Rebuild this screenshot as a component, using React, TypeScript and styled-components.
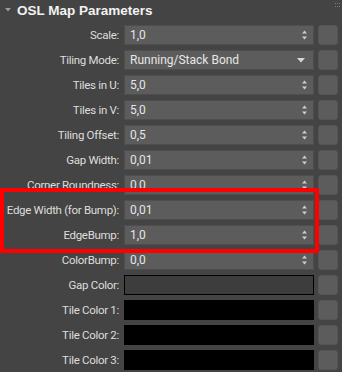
import styled, { createGlobalStyle } from 'styled-components'

const GlobalStyle = createGlobalStyle`
  html, body {
    margin: 0;
    padding: 0;
    background: #444444;
  }
  body {
    font-family: Roboto, 'Liberation Sans', Arial, sans-serif;
  }
`

const Panel = styled.div`
  position: relative;
  width: 342px;
  height: 372px;
  background: #444444;
  overflow: hidden;
`

const Header = styled.div`
  display: flex;
  align-items: center;
  height: 20px;
  padding-left: 5px;
  gap: 5px;
  color: #f2f2f2;
  font-family: 'Liberation Sans', Arial, sans-serif;
  font-size: 13.5px;
  font-weight: bold;
`

const Grip = styled.svg`
  position: absolute;
  top: 3px;
  right: 1px;
`

const Rows = styled.div`
  display: flex;
  flex-direction: column;
  gap: 5px;
  padding-top: 5px;
`

const Row = styled.div`
  display: grid;
  grid-template-columns: 120px 190px 20px;
  column-gap: 4px;
  align-items: center;
  height: 20px;
`

const Label = styled.div`
  text-align: right;
  padding-right: 1px;
  color: #dedede;
  font-size: 11.5px;
  letter-spacing: -0.3px;
  white-space: nowrap;
`

const Field = styled.div<{ $swatch?: string }>`
  box-sizing: border-box;
  height: 20px;
  display: flex;
  align-items: center;
  justify-content: space-between;
  padding: 0 5px;
  background: ${(p) => p.$swatch ?? '#5c5c5c'};
  border: 1px solid ${(p) => (p.$swatch ? '#000000' : '#4e4e4e')};
  color: #e6e6e6;
  font-size: 12px;
`

const SideButton = styled.div`
  box-sizing: border-box;
  width: 20px;
  height: 20px;
  border-radius: 3px;
  background: #5c5c5c;
  border: 1px solid #555555;
`

const Highlight = styled.div`
  position: absolute;
  left: 0;
  top: 188px;
  width: 319px;
  height: 65px;
  box-sizing: border-box;
  border: 4px solid #ff0000;
  pointer-events: none;
`

const Spinner = () => (
  <svg width="7" height="10" viewBox="0 0 7 10">
    <path d="M3.5 0.5 L6 3.5 L1 3.5 Z" fill="#cfcfcf" />
    <path d="M1 6.5 L6 6.5 L3.5 9.5 Z" fill="#cfcfcf" />
  </svg>
)

const DropArrow = () => (
  <svg width="8" height="5" viewBox="0 0 8 5" style={{ marginRight: 3 }}>
    <path d="M0 0 L8 0 L4 4.5 Z" fill="#d6d6d6" />
  </svg>
)

type Param = {
  label: string
  value?: string
  kind: 'spin' | 'drop' | 'color'
  swatch?: string
}

const params: Param[] = [
  { label: 'Scale:', value: '1,0', kind: 'spin' },
  { label: 'Tiling Mode:', value: 'Running/Stack Bond', kind: 'drop' },
  { label: 'Tiles in U:', value: '5,0', kind: 'spin' },
  { label: 'Tiles in V:', value: '5,0', kind: 'spin' },
  { label: 'Tiling Offset:', value: '0,5', kind: 'spin' },
  { label: 'Gap Width:', value: '0,01', kind: 'spin' },
  { label: 'Corner Roundness:', value: '0,0', kind: 'spin' },
  { label: 'Edge Width (for Bump):', value: '0,01', kind: 'spin' },
  { label: 'EdgeBump:', value: '1,0', kind: 'spin' },
  { label: 'ColorBump:', value: '0,0', kind: 'spin' },
  { label: 'Gap Color:', kind: 'color', swatch: '#3d3d3d' },
  { label: 'Tile Color 1:', kind: 'color', swatch: '#000000' },
  { label: 'Tile Color 2:', kind: 'color', swatch: '#000000' },
  { label: 'Tile Color 3:', kind: 'color', swatch: '#000000' },
]

const App = () => {
  return (
    <>
      <GlobalStyle />
      <Panel>
        <Header>
          <svg width="7" height="6" viewBox="0 0 7 6">
            <path d="M0 1 L6 1 L3 4.5 Z" fill="#9a9a9a" />
          </svg>
          <span>OSL Map Parameters</span>
        </Header>
        <Grip width="6" height="5" viewBox="0 0 6 5">
          {[0, 2, 4].map((x) =>
            [0, 3].map((y) => (
              <rect key={`${x}-${y}`} x={x} y={y} width="1" height="1" fill="#7a7a7a" />
            )),
          )}
        </Grip>
        <Rows>
          {params.map((p) => (
            <Row key={p.label}>
              <Label>{p.label}</Label>
              <Field $swatch={p.swatch}>
                <span>{p.value}</span>
                {p.kind === 'spin' && <Spinner />}
                {p.kind === 'drop' && <DropArrow />}
              </Field>
              <SideButton />
            </Row>
          ))}
        </Rows>
        <Highlight />
      </Panel>
    </>
  )
}

export default App
